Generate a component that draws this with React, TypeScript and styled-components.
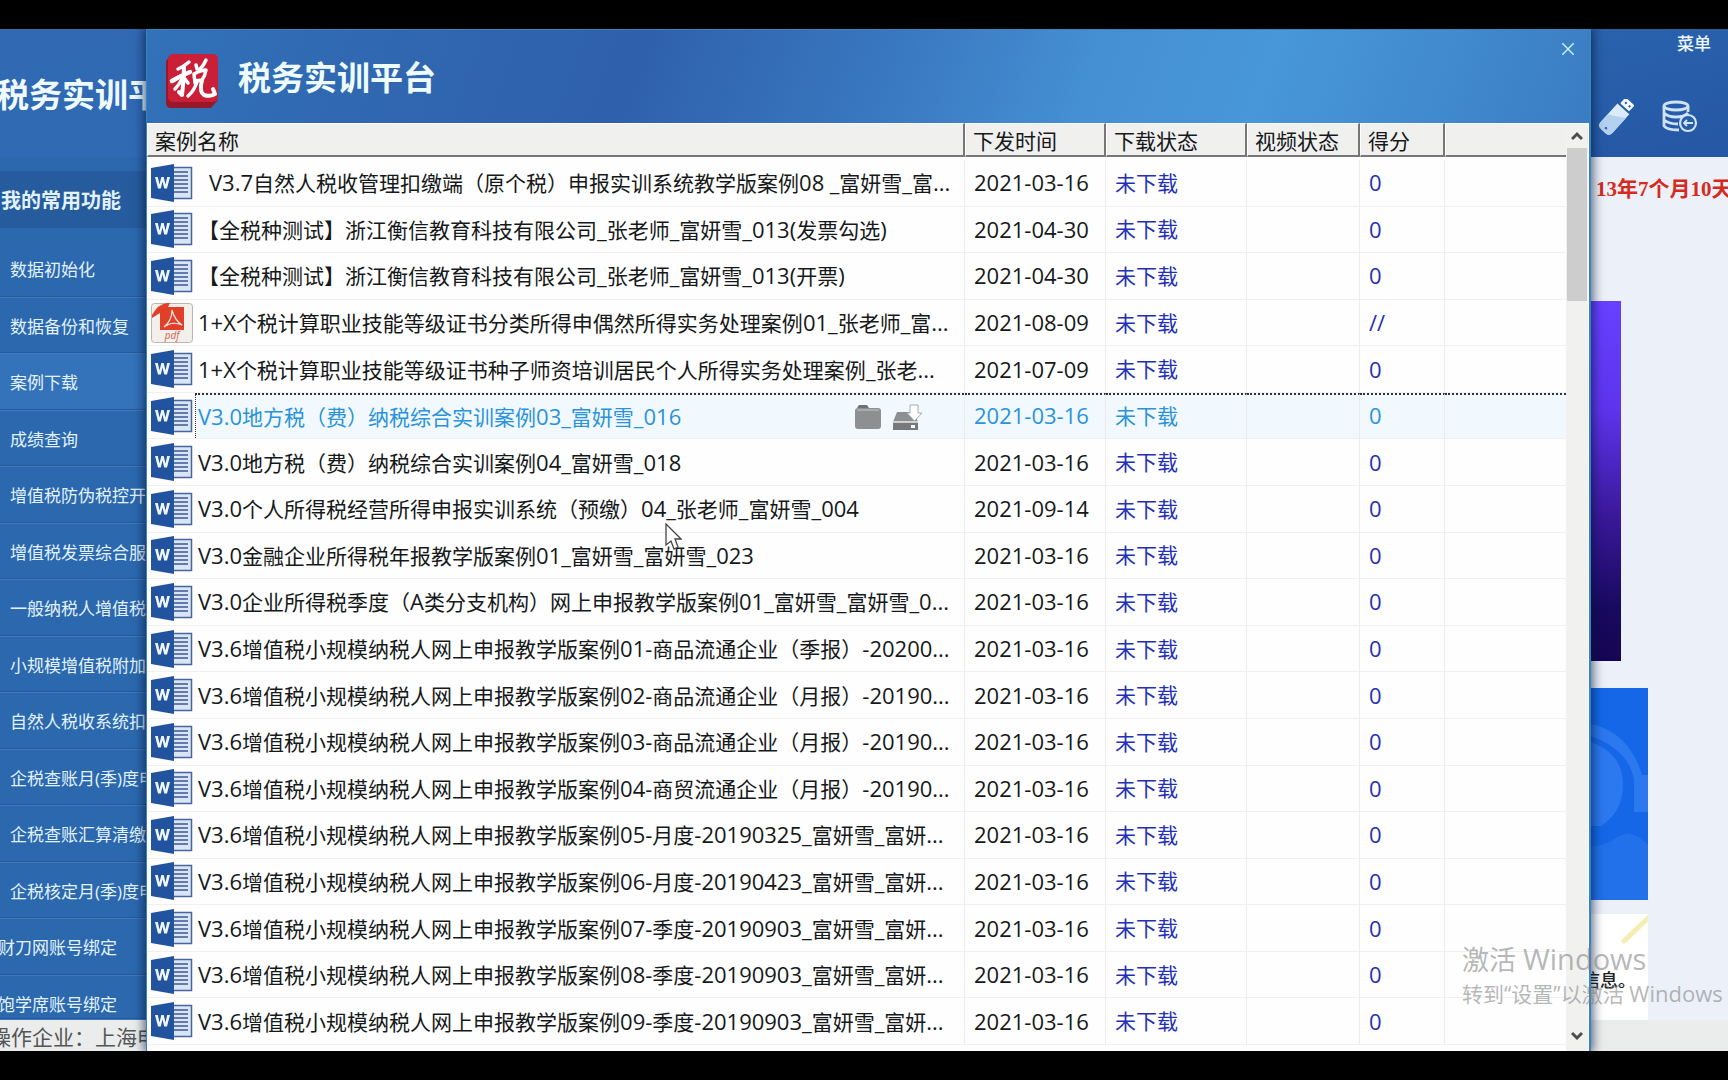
import React from 'react';
import styled, { createGlobalStyle, css } from 'styled-components';

const Global = createGlobalStyle`
  * { box-sizing: border-box; }
  body { margin: 0; background: #000; overflow: hidden; }
  body, button, a, table { font-family: "Open Sans", "Noto Sans CJK SC", sans-serif; }
  button { border: 0; padding: 0; background: none; color: inherit; cursor: pointer; }
  svg { display: block; }
`;

const Screen = styled.div`
  height: 100vh;
  padding: 29px 0;
  display: flex;
  background: #000;
`;
const Desktop = styled.div`
  position: relative;
  flex: 1;
  min-width: 0;
  display: flex;
  flex-direction: column;
  overflow: hidden;
  background: #ecf0f8;
`;
const AppHeader = styled.header`
  flex: none;
  height: 128px;
  display: flex;
  align-items: flex-start;
  justify-content: space-between;
  background: linear-gradient(165deg, #3169b3 0%, #2f6bb4 50%, #2457a4 100%);
  color: #eefaff;
`;
const AppTitle = styled.h1`
  margin: 44px 0 0 -4px;
  font-size: 33px;
  line-height: 44px;
  font-weight: 700;
  white-space: nowrap;
`;
const HeaderTools = styled.div`
  width: 130px;
  display: flex;
  flex-direction: column;
  gap: 44px;
`;
const MenuButton = styled.button`
  align-self: flex-end;
  margin: 4px 17px 0 0;
  font-size: 17px;
  line-height: 22px;
  font-weight: 500;
`;
const ToolRow = styled.div`
  display: flex;
  gap: 28px;
  color: #dcecfb;
`;
const Body = styled.div`
  flex: 1;
  min-height: 0;
  display: flex;
`;
const Sidebar = styled.nav`
  width: 240px;
  display: flex;
  flex-direction: column;
  padding-top: 14px;
  background: #2c68ae;
  color: #e2f3ff;
  overflow: hidden;
`;
const SideHeading = styled.h2`
  flex: none;
  margin: 0 0 13px;
  padding: 2px 1px 0;
  height: 57px;
  line-height: 56px;
  font-size: 20px;
  font-weight: 700;
  background: #265c9d;
  white-space: nowrap;
`;
const SideList = styled.div`
  flex: 1;
  min-height: 0;
  display: grid;
  grid-template-rows: repeat(13, 1fr) 44px;
`;
const SideItem = styled.a<{ $active?: boolean; $flush?: boolean }>`
  padding: 17px 0 0 ${p => (p.$flush ? 0 : 10)}px;
  text-indent: ${p => (p.$flush ? -2 : 0)}px;
  font-size: 17px;
  line-height: 24px;
  color: inherit;
  text-decoration: none;
  white-space: nowrap;
  overflow: hidden;
  border-bottom: 1px solid #4279bb;
  box-shadow: inset 0 -1px #245b9e;
  ${p => p.$active && css`background: #3472b9;`}
`;
const Workspace = styled.main`
  flex: 1;
  display: flex;
  flex-direction: column;
  align-items: flex-end;
  padding-top: 18px;
`;
const Notice = styled.p`
  width: 132px;
  margin: 0;
  font-family: "Liberation Serif", "Noto Sans CJK SC", sans-serif;
  font-size: 21px;
  line-height: 28px;
  font-weight: 700;
  color: #d52a20;
  white-space: nowrap;
  overflow: hidden;
`;
const Banner = styled.div`
  width: 400px;
  height: 360px;
  margin: 98px 107px 27px 0;
  background: linear-gradient(#6640ff, #5e34ec 30%, #3a1899 60%, #180a60 85%, #160552);
`;
const SupportCard = styled.div`
  width: 400px;
  height: 212px;
  margin: 0 80px 14px 0;
  display: flex;
  justify-content: flex-end;
  background: #1567e8;
`;
const InfoCard = styled.div`
  width: 400px;
  height: 106px;
  margin-right: 80px;
  display: flex;
  flex-direction: column;
  align-items: flex-end;
  background: #fff;
`;
const InfoText = styled.p`
  margin: 22px 12px 0;
  font-size: 18px;
  line-height: 24px;
  font-weight: 500;
  color: #222;
`;
const StatusBar = styled.footer`
  flex: none;
  height: 31px;
  font-size: 21px;
  line-height: 35px;
  background: #ebeded;
  color: #555;
  white-space: nowrap;
  overflow: hidden;
`;
const Shifted = styled.span`
  margin-left: -10px;
`;

const Dialog = styled.section`
  position: absolute;
  inset: 0 137px 0 146px;
  display: flex;
  flex-direction: column;
  background: #fdfefd;
  border: 1px solid #3585c5;
  border-width: 1px 2px 0 1px;
  box-shadow: 0 0 10px 2px rgba(0, 20, 50, 0.65);
`;
const DialogHeader = styled.header`
  flex: none;
  height: 93px;
  display: flex;
  align-items: flex-start;
  gap: 19px;
  padding: 23px 13px 0 18px;
  color: #eefcff;
  background: linear-gradient(110deg, #3272b9 0%, #3069b1 14%, #2f61ab 34%, #3876bf 50%, #458fd3 65%, #4897d8 77%, #4089cc 90%, #3a7cc2 100%);
`;
const DialogTitle = styled.h2`
  flex: 1;
  margin: 3px 0 0;
  font-size: 33px;
  line-height: 44px;
  font-weight: 700;
`;
const CloseButton = styled.button`
  margin-top: -12px;
  padding: 2px;
`;
const DialogBody = styled.div`
  flex: 1;
  min-height: 0;
  display: flex;
`;
const Table = styled.table`
  flex: 1;
  min-width: 0;
  display: flex;
  flex-direction: column;
  font-size: 21px;
  color: #16181a;
`;
const rowGrid = css`
  display: grid;
  grid-template-columns: minmax(0, 1fr) 141px 141px 113px 85px 121px;
`;
const Head = styled.thead`
  flex: none;
  margin-bottom: 3px;
`;
const HeadRow = styled.tr`
  ${rowGrid}
`;
const HeadCell = styled.th`
  height: 34px;
  padding: 0 7px;
  font-weight: 400;
  text-align: left;
  line-height: 35px;
  background: #f0f0ef;
  white-space: nowrap;
  border-bottom: 2px solid #777;
  border-right: 2px solid #777;
  border-left: 1px solid #fff;
  border-top: 1px solid #fff;
  &:last-child { border-right: 0; }
`;
const Rows = styled.tbody`
  flex: 1;
  min-height: 0;
  display: grid;
  grid-template-rows: repeat(19, minmax(0, 1fr));
  margin-bottom: 6px;
`;
const Row = styled.tr<{ $selected?: boolean }>`
  ${rowGrid}
  ${p => p.$selected && css`
    color: #2a93dc;
    td { background: #f1f9fe; border-top: 2px dotted #333; padding-bottom: 2px; }
    td:first-child { background: linear-gradient(90deg, #fdfefd 49px, #f1f9fe 49px); border-top-color: transparent; }
  `}
`;
const cellBase = css`
  display: flex;
  align-items: center;
  min-width: 0;
  line-height: 28px;
  white-space: nowrap;
  border-bottom: 1px solid #f0f0ee;
  border-right: 1px solid #ececea;
`;
const NameCell = styled.td`
  ${cellBase}
  padding: 0 0 0 4px;
  gap: 2px;
`;
const FileName = styled.span<{ $selected?: boolean; $indent: number }>`
  flex: 1;
  align-self: stretch;
  display: flex;
  align-items: center;
  min-width: 0;
  padding-left: ${p => 2 + p.$indent}px;
  overflow: hidden;
  border-left: 1px solid transparent;
  ${p => p.$selected && css`
    margin: -2px 0 -2px;
    border-left: 1px dotted #333;
    border-top: 2px dotted #333;
  `}
`;
const RowActions = styled.span`
  margin-left: auto;
  margin-right: 42px;
  display: flex;
  gap: 10px;
`;
const Cell = styled.td`
  ${cellBase}
  padding: 0 0 0 9px;
  &:last-child { border-right: 0; }
`;
const ValueCell = styled(Cell)`
  color: #2430b8;
`;
const Latin = styled.span<{ $size: number }>`
  font-size: ${p => p.$size}px;
`;
const Scrollbar = styled.div`
  width: 22px;
  flex: none;
  margin: 1px 1px 0 0;
  display: flex;
  flex-direction: column;
  background: #f1f1f0;
`;
const ArrowButton = styled.button`
  height: 24px;
  display: flex;
  align-items: center;
  justify-content: center;
  &:last-child { margin-bottom: 3px; }
`;
const Track = styled.div`
  flex: 1;
  padding: 0 1px 0 1px;
`;
const Thumb = styled.div`
  height: 153px;
  background: #cdcdcd;
`;
const Watermark = styled.div`
  position: absolute;
  right: 0;
  bottom: 42px;
  width: 266px;
  color: rgba(120, 122, 124, 0.55);
  white-space: nowrap;
  pointer-events: none;
`;
const MarkTitle = styled.p`
  margin: 0;
  font-size: 27px;
  line-height: 36px;
`;
const MarkText = styled.p`
  margin: 0;
  font-size: 21px;
  line-height: 30px;
`;
const Pointer = styled.svg`
  position: absolute;
  left: 664px;
  top: 494px;
`;

const WordIcon = () => (
  <svg width="42" height="40" viewBox="0 0 42 40" aria-label="Word">
    <rect x="20" y="4.500" width="20.500" height="31" fill="#d9e4f4" stroke="#48659d" strokeWidth="1.500" />
    <path d="M23 9H37M23 13H37M23 17H37M23 21H37M23 25H37M23 29H37" stroke="#3a5894" strokeWidth="1.300" />
    <path d="M0 5L23 1V39L0 35Z" fill="#22539f" />
    <path d="M4 14H6.800L8.500 21.500L10.300 14H12.700L14.500 21.500L16.200 14H19L16 25.500H13.200L11.500 18.500L9.800 25.500H7Z" fill="#eef6ff" />
  </svg>
);
const PdfIcon = () => (
  <svg width="42" height="42" viewBox="0 0 42 42" aria-label="PDF">
    <rect x="0.500" y="1.500" width="41" height="39" rx="3" fill="#f3f0ec" stroke="#b9b5b1" />
    <path d="M1 13Q7 2 16 1H19L17 5H33V28H9V11L1 16Z" fill="#e0402a" />
    <path d="M21 8C23 16 28 21 31 23C25 20 18 21 13 25C18 21 21 15 21 8Z" fill="none" stroke="#ffe6e0" strokeWidth="1.200" />
    <text x="21" y="37" fontSize="10" fontStyle="italic" textAnchor="middle" fill="#d2604e">pdf</text>
  </svg>
);
const FolderIcon = () => (
  <svg width="28" height="26" viewBox="0 0 28 26">
    <path d="M3 4L5 1H13L15 4Z" fill="#6e7274" />
    <rect x="1" y="4" width="26" height="21" rx="3" fill="#8d8f90" />
    <path d="M3 6H25" stroke="#b2b4b5" strokeWidth="1.500" />
  </svg>
);
const SaveIcon = () => (
  <svg width="30" height="28" viewBox="0 0 30 28">
    <path d="M5 9H22L26 19H1Z" fill="#8d8f90" />
    <path d="M1 19H26V27H1Z" fill="#777a7c" />
    <path d="M1 19H26" stroke="#e8eaeb" strokeWidth="1.500" />
    <rect x="19" y="22" width="4" height="3" fill="#fff" />
    <path d="M18 2H26V10H30L22.500 18L15 10H18Z" fill="#fff" stroke="#a7abad" />
  </svg>
);
const LogoIcon = () => (
  <svg width="54" height="56" viewBox="0 0 54 56" aria-label="税">
    <path d="M5 3L1 8V50Q1 55 6 55H46L53 47Z" fill="#98182b" />
    <rect x="3" y="1" width="50" height="48" rx="5" fill="#cb1f38" />
    <g fill="none" stroke="#fff" strokeLinecap="round" strokeLinejoin="round">
      <path d="M24 9Q18 14 13 16" strokeWidth="3.500" />
      <path d="M7 28Q15 23 25 19" strokeWidth="4.500" />
      <path d="M19 14Q19 27 17 42L14 39" strokeWidth="4" />
      <path d="M17 26Q14 32 10 36M20 26L23 30" strokeWidth="3.500" />
      <path d="M31 12L32 16M41 7Q39 12 35 16" strokeWidth="3.500" />
      <path d="M29 21L30 30M29 21Q36 17 41 17Q40 23 37 27L30 28" strokeWidth="3.500" />
      <path d="M32 29Q29 38 23 43" strokeWidth="3.500" />
      <path d="M37 27Q34 39 39 42Q45 44 50 41L48 36" strokeWidth="4" />
    </g>
  </svg>
);
const UsbIcon = () => (
  <svg width="36" height="36" viewBox="0 0 36 36">
    <g transform="rotate(42 18 18)">
      <path d="M10 7H26V32Q26 37 21 37H15Q10 37 10 32Z" fill="#dcebfa" />
      <path d="M10 22L26 12V32Q26 37 21 37H15Q10 37 10 32Z" fill="#b4d2f0" />
      <rect x="12" y="-3" width="12" height="8" rx="1" fill="#f2f9ff" />
      <path d="M16 0V2M21 0V2" stroke="#2759a4" strokeWidth="2" />
      <circle cx="18" cy="33" r="1.300" fill="#2e65ad" />
    </g>
  </svg>
);
const DatabaseIcon = () => (
  <svg width="36" height="34" viewBox="0 0 36 34" fill="none" stroke="#cfe4fa" strokeWidth="2.800">
    <ellipse cx="14" cy="6" rx="12" ry="4" />
    <path d="M2 6V26Q5 30 17 30M26 6V12M2 13Q6 17 14 17Q22 17 26 13M2 20Q7 24 16 24" />
    <circle cx="26" cy="23" r="8" fill="#285ca7" strokeWidth="2.200" />
    <path d="M31 23H22M25 20L22 23L25 26" strokeWidth="1.800" />
  </svg>
);
const Headset = () => (
  <svg width="57" height="212" viewBox="0 0 57 212">
    <path d="M0 36Q38 44 51 87H57V124H43V92Q38 62 0 48Z" fill="#2b78ef" />
    <path d="M0 54Q32 66 32 96Q32 124 10 138H0Z" fill="#2b78ef" />
    <path d="M0 158Q16 158 26 149Q37 142 48 149L57 157V212H0Z" fill="#2270ea" />
  </svg>
);
const Chevron = ({ d }: { d: string }) => (
  <svg width="12" height="10" viewBox="0 0 12 10" fill="none" stroke="#4d4d4d" strokeWidth="3"><path d={d} /></svg>
);

/* Sets runs of Latin letters and digits slightly larger than the Chinese text around them. */
const Mixed = ({ text, size }: { text: string; size: number }) => (
  <span>
    {text.split(/([\x21-\x7e]+)/).map((run, i) =>
      i % 2 ? <Latin key={i} $size={size}>{run}</Latin> : run
    )}
  </span>
);

type Case = { name: string; date: string; score?: string; pdf?: boolean; indent?: number; selected?: boolean };
const cases: Case[] = [
  { name: 'V3.7自然人税收管理扣缴端（原个税）申报实训系统教学版案例08 _富妍雪_富...', date: '2021-03-16', indent: 11 },
  { name: '【全税种测试】浙江衡信教育科技有限公司_张老师_富妍雪_013(发票勾选)', date: '2021-04-30' },
  { name: '【全税种测试】浙江衡信教育科技有限公司_张老师_富妍雪_013(开票)', date: '2021-04-30' },
  { name: '1+X个税计算职业技能等级证书分类所得申偶然所得实务处理案例01_张老师_富...', date: '2021-08-09', score: '//', pdf: true },
  { name: '1+X个税计算职业技能等级证书种子师资培训居民个人所得实务处理案例_张老...', date: '2021-07-09' },
  { name: 'V3.0地方税（费）纳税综合实训案例03_富妍雪_016', date: '2021-03-16', selected: true },
  { name: 'V3.0地方税（费）纳税综合实训案例04_富妍雪_018', date: '2021-03-16' },
  { name: 'V3.0个人所得税经营所得申报实训系统（预缴）04_张老师_富妍雪_004', date: '2021-09-14' },
  { name: 'V3.0金融企业所得税年报教学版案例01_富妍雪_富妍雪_023', date: '2021-03-16' },
  { name: 'V3.0企业所得税季度（A类分支机构）网上申报教学版案例01_富妍雪_富妍雪_0...', date: '2021-03-16' },
  { name: 'V3.6增值税小规模纳税人网上申报教学版案例01-商品流通企业（季报）-20200...', date: '2021-03-16' },
  { name: 'V3.6增值税小规模纳税人网上申报教学版案例02-商品流通企业（月报）-20190...', date: '2021-03-16' },
  { name: 'V3.6增值税小规模纳税人网上申报教学版案例03-商品流通企业（月报）-20190...', date: '2021-03-16' },
  { name: 'V3.6增值税小规模纳税人网上申报教学版案例04-商贸流通企业（月报）-20190...', date: '2021-03-16' },
  { name: 'V3.6增值税小规模纳税人网上申报教学版案例05-月度-20190325_富妍雪_富妍...', date: '2021-03-16' },
  { name: 'V3.6增值税小规模纳税人网上申报教学版案例06-月度-20190423_富妍雪_富妍...', date: '2021-03-16' },
  { name: 'V3.6增值税小规模纳税人网上申报教学版案例07-季度-20190903_富妍雪_富妍...', date: '2021-03-16' },
  { name: 'V3.6增值税小规模纳税人网上申报教学版案例08-季度-20190903_富妍雪_富妍...', date: '2021-03-16' },
  { name: 'V3.6增值税小规模纳税人网上申报教学版案例09-季度-20190903_富妍雪_富妍...', date: '2021-03-16' },
];
const sideItems = ['数据初始化', '数据备份和恢复', '案例下载', '成绩查询', '增值税防伪税控开', '增值税发票综合服', '一般纳税人增值税', '小规模增值税附加', '自然人税收系统扣', '企税查账月(季)度申', '企税查账汇算清缴', '企税核定月(季)度申', '财刀网账号绑定', '饱学席账号绑定'];
const columns = ['案例名称', '下发时间', '下载状态', '视频状态', '得分', ''];

export default function App() {
  return (
    <Screen>
      <Global />
      <Desktop>
        <AppHeader>
          <AppTitle>税务实训平</AppTitle>
          <HeaderTools>
            <MenuButton>菜单</MenuButton>
            <ToolRow>
              <button aria-label="U盘"><UsbIcon /></button>
              <button aria-label="数据恢复"><DatabaseIcon /></button>
            </ToolRow>
          </HeaderTools>
        </AppHeader>
        <Body>
          <Sidebar>
            <SideHeading>我的常用功能</SideHeading>
            <SideList>
              {sideItems.map((t, i) => (
                <SideItem key={t} href="#" $active={i === 2} $flush={i > 11}>{t}</SideItem>
              ))}
            </SideList>
          </Sidebar>
          <Workspace>
            <Notice>13年7个月10天</Notice>
            <Banner />
            <SupportCard><Headset /></SupportCard>
            <InfoCard>
              <svg width="27" height="32" viewBox="0 0 27 32"><path d="M3 27L27 4" stroke="#f5eeb0" strokeWidth="5" strokeLinecap="round" /></svg>
              <InfoText>信息。</InfoText>
            </InfoCard>
          </Workspace>
        </Body>
        <StatusBar><Shifted>操作企业：上海申</Shifted></StatusBar>

        <Dialog>
          <DialogHeader>
            <LogoIcon />
            <DialogTitle>税务实训平台</DialogTitle>
            <CloseButton aria-label="关闭">
              <svg width="12" height="12" viewBox="0 0 12 12"><path d="M0 0L12 12M12 0L0 12" stroke="#c8ecff" strokeWidth="1.500" /></svg>
            </CloseButton>
          </DialogHeader>
          <DialogBody>
            <Table>
              <Head>
                <HeadRow>{columns.map(c => <HeadCell key={c}>{c}</HeadCell>)}</HeadRow>
              </Head>
              <Rows>
                {cases.map(c => {
                  const Value = c.selected ? Cell : ValueCell;
                  return (
                    <Row key={c.name} $selected={c.selected}>
                      <NameCell>
                        {c.pdf ? <PdfIcon /> : <WordIcon />}
                        <FileName $selected={c.selected} $indent={c.indent ?? 0}>
                          <Mixed text={c.name} size={22} />
                          {c.selected && (
                            <RowActions>
                              <button aria-label="打开文件夹"><FolderIcon /></button>
                              <button aria-label="下载"><SaveIcon /></button>
                            </RowActions>
                          )}
                        </FileName>
                      </NameCell>
                      <Cell><Mixed text={c.date} size={22} /></Cell>
                      <Value>未下载</Value>
                      <Cell />
                      <Value><Mixed text={c.score ?? '0'} size={22} /></Value>
                      <Cell />
                    </Row>
                  );
                })}
              </Rows>
            </Table>
            <Scrollbar>
              <ArrowButton aria-label="向上滚动"><Chevron d="M1 8L6 3L11 8" /></ArrowButton>
              <Track><Thumb /></Track>
              <ArrowButton aria-label="向下滚动"><Chevron d="M1 2L6 7L11 2" /></ArrowButton>
            </Scrollbar>
          </DialogBody>
        </Dialog>

        <Pointer width="18" height="28" viewBox="0 0 18 28">
          <path d="M2 1V22L7 18L10 26L14 24L11 16H17Z" fill="#fff" stroke="#444" strokeWidth="1.300" />
        </Pointer>
        <Watermark>
          <MarkTitle><Mixed text="激活 Windows" size={29} /></MarkTitle>
          <MarkText><Mixed text="转到“设置”以激活 Windows" size={22} /></MarkText>
        </Watermark>
      </Desktop>
    </Screen>
  );
}
